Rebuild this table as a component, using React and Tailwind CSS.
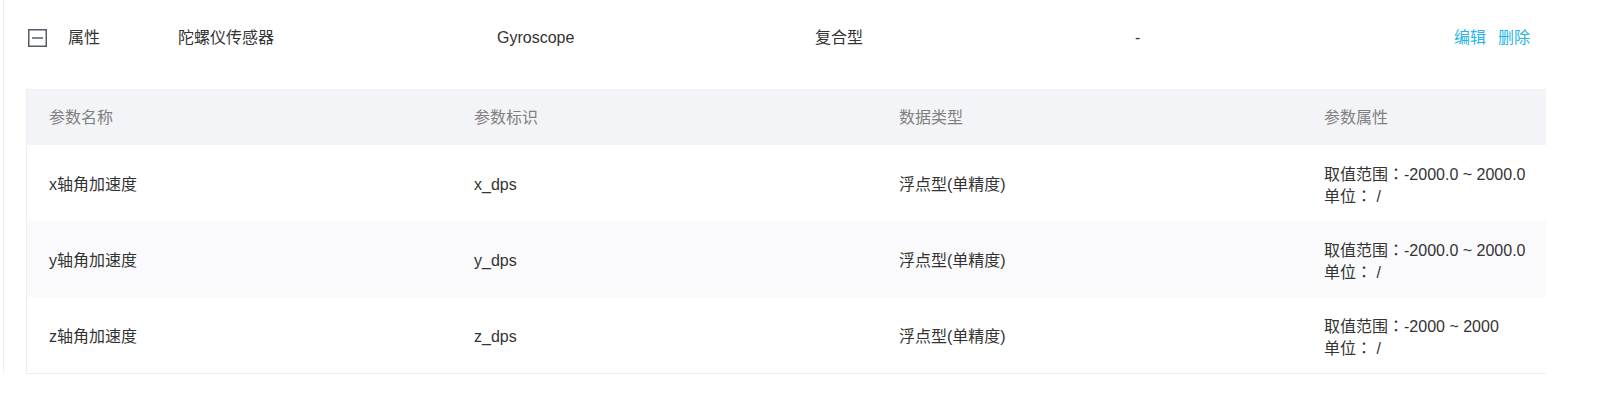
import React from 'react';

const font = { fontFamily: '"Liberation Sans", "Noto Sans CJK SC", sans-serif' };
const colonFont = { fontFamily: '"Noto Sans CJK TC", sans-serif' };

const params = [
  { name: 'x轴角加速度', key: 'x_dps', type: '浮点型(单精度)', range: '-2000.0 ~ 2000.0', unit: '/' },
  { name: 'y轴角加速度', key: 'y_dps', type: '浮点型(单精度)', range: '-2000.0 ~ 2000.0', unit: '/' },
  { name: 'z轴角加速度', key: 'z_dps', type: '浮点型(单精度)', range: '-2000 ~ 2000', unit: '/' },
];

function MinusBox() {
  return (
    <svg width="19" height="18" viewBox="0 0 19 18" className="shrink-0">
      <rect x="0.75" y="0.75" width="17.5" height="16.5" fill="none" stroke="#555c66" strokeWidth="1.5" />
      <line x1="4" y1="9" x2="15" y2="9" stroke="#555c66" strokeWidth="1.5" />
    </svg>
  );
}

export default function App() {
  return (
    <div className="w-[1617px] h-[408px] bg-white" style={font}>
      <div className="ml-[3px] border-l border-[#eeeeee] h-[373px] pl-[22px]">
        {/* 属性行 */}
        <div className="flex items-center h-[75px] text-[16px] text-[#333]">
          <div className="w-[42px] flex pl-[2px]"><MinusBox /></div>
          <span className="w-[110px]">属性</span>
          <span className="w-[319px]">陀螺仪传感器</span>
          <span className="w-[318px]">Gyroscope</span>
          <span className="w-[320px]">复合型</span>
          <span className="w-[319px]">-</span>
          <span className="flex gap-[12px] text-[#26b5e4]">
            <span>编辑</span>
            <span>删除</span>
          </span>
        </div>

        {/* 参数表 */}
        <div className="mt-[14px] w-[1520px] overflow-hidden border-l border-b border-[#eeeeee] text-[16px]">
          <div className="grid grid-cols-[424px_425px_425px_1fr] h-[56px] items-center bg-[#f3f4f7] border-t border-[#eef0f3] text-[#808080]">
            <div className="pl-[22px]">参数名称</div>
            <div className="pl-[23px]">参数标识</div>
            <div className="pl-[23px]">数据类型</div>
            <div className="pl-[23px]">参数属性</div>
          </div>
          {params.map((p, i) => (
            <div
              key={p.key}
              className={`grid grid-cols-[424px_425px_425px_1fr] h-[76px] pt-[4px] items-center text-[#333] ${i % 2 === 1 ? 'bg-[#fafafc]' : 'bg-white'}`}
            >
              <div className="pl-[22px]">{p.name}</div>
              <div className="pl-[23px]">{p.key}</div>
              <div className="pl-[23px]">{p.type}</div>
              <div className="pl-[23px] leading-[20px] whitespace-nowrap">
                <div>取值范围<span style={colonFont}>：</span>{p.range}</div>
                <div>单位<span style={colonFont}>：</span> {p.unit}</div>
              </div>
            </div>
          ))}
        </div>
      </div>
    </div>
  );
}
